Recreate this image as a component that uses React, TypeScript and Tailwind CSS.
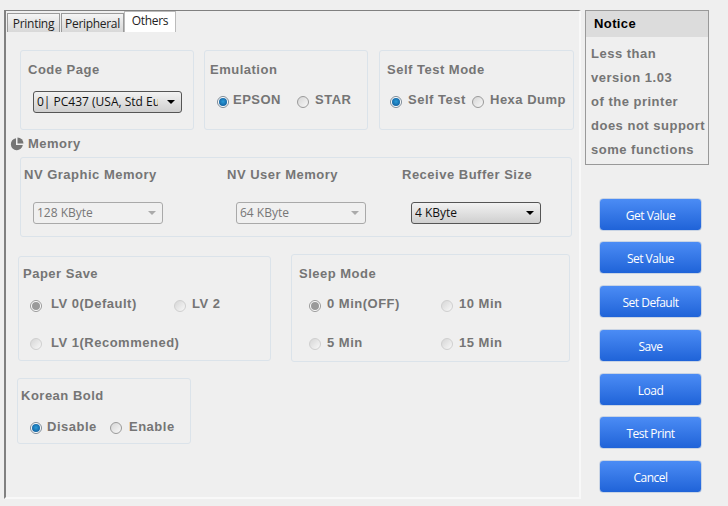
import React from "react";

const label = "font-['Liberation_Sans',sans-serif] font-bold text-[13px] leading-[16px] tracking-[0.5px] text-[#757575] whitespace-nowrap";

function Radio({ text, checked, off, high, gap = "gap-[6px]", className = "" }: { text: string; checked?: boolean; off?: boolean; high?: boolean; gap?: string; className?: string }) {
  return (
    <div className={`flex items-center ${gap} ${className}`}>
      {checked ? (
        <span className={`w-[12px] h-[12px] rounded-full border flex items-center justify-center bg-white shrink-0 ${off ? "border-[#999]" : "border-[#7d8a96]"}`}>
          <span className={`w-[8px] h-[8px] rounded-full ${off ? "bg-[#9a9a9a]" : "bg-[radial-gradient(circle_at_50%_45%,#2a9bd8,#0a4f8f)]"}`} />
        </span>
      ) : (
        <span className={`w-[12px] h-[12px] rounded-full border bg-gradient-to-br from-[#d6d6d6] to-[#f8f8f8] shrink-0 ${off ? "border-[#cfcfcf]" : "border-[#9a9a9a]"}`} />
      )}
      <span className={`${label} ${high ? "mb-[4px]" : "mb-[2px]"} ${off ? "text-[#8a8a8a]" : ""}`}>{text}</span>
    </div>
  );
}

function Select({ text, off, className }: { text: string; off?: boolean; className: string }) {
  return (
    <div
      className={`h-[22px] rounded-[3px] border flex items-center pl-[3px] pr-[5px] overflow-hidden font-['Open_Sans',sans-serif] text-[12px] ${
        off
          ? "border-[#a9a9a9] bg-[#f0f0f0] text-[#777]"
          : "border-[#555] bg-gradient-to-b from-[#f2f2f2] to-[#cfcfcf] text-[#111]"
      } ${className}`}
    >
      <span className="flex-1 overflow-hidden whitespace-nowrap">{text}</span>
      <span className={`ml-[9px] mr-[1px] w-0 h-0 border-x-[4px] border-x-transparent border-t-[4px] ${off ? "border-t-[#aaa]" : "border-t-black"}`} />
    </div>
  );
}

function Group({ className, children }: { className: string; children: React.ReactNode }) {
  return <div className={`rounded-[3px] border border-[#dbe3ea] shrink-0 ${className}`}>{children}</div>;
}

function Tab({ text, active, className }: { text: string; active?: boolean; className: string }) {
  return (
    <div
      className={`border border-b-0 font-['Open_Sans',sans-serif] text-[12px] leading-[16px] tracking-[-0.3px] text-[#222] flex justify-center ${
        active
          ? "h-[21px] bg-white border-[#bbb] pt-[1px]"
          : "h-[19px] mt-[2px] bg-gradient-to-b from-[#f4f4f4] to-[#d8d8d8] border-[#9a9a9a] pt-[2px]"
      } ${className}`}
    >
      {text}
    </div>
  );
}

function Btn({ text, className = "" }: { text: string; className?: string }) {
  return (
    <div className={`w-[103px] h-[33px] pt-[2px] rounded-[4px] bg-gradient-to-b from-[#4b8cf5] to-[#1f63d8] border border-[#c9d4e4] flex items-center justify-center font-['Open_Sans',sans-serif] text-[12px] tracking-[-0.5px] text-white ${className}`}>
      {text}
    </div>
  );
}

export default function App() {
  return (
    <div className="w-[728px] h-[506px] bg-[#efefef] flex overflow-hidden">
      {/* main tab panel */}
      <div className="ml-[4px] mt-[10px] w-[577px] h-[489px] border-l-2 border-t border-[#808080] border-r-2 border-b-2 border-r-[#f8f8f8] border-b-[#f8f8f8] shrink-0">
        <div className="flex pl-[1px] h-[21px]">
          <Tab text="Printing" className="w-[53px]" />
          <Tab text="Peripheral" className="w-[63px] ml-[1px]" />
          <Tab text="Others" active className="w-[52px]" />
        </div>

        <div className="flex pl-[14px] gap-[10px] mt-[18px]">
          <Group className="w-[174px] h-[80px] pl-[7px] pt-[11px]">
            <div className={label}>Code Page</div>
            <Select text="0| PC437 (USA, Std Europe)" className="w-[149px] mt-[13px] ml-[5px]" />
          </Group>
          <Group className="w-[164px] h-[80px] pl-[5px] pt-[11px]">
            <div className={label}>Emulation</div>
            <div className="flex mt-[14px] ml-[7px]">
              <Radio text="EPSON" checked high gap="gap-[4px]" className="w-[80px]" />
              <Radio text="STAR" high />
            </div>
          </Group>
          <Group className="w-[195px] h-[80px] ml-[1px] pl-[7px] pt-[11px]">
            <div className={label}>Self Test Mode</div>
            <div className="flex mt-[14px] ml-[3px]">
              <Radio text="Self Test" checked high className="w-[82px]" />
              <Radio text="Hexa Dump" high />
            </div>
          </Group>
        </div>

        <div className="flex items-center gap-[4px] ml-[4px] mt-[6px] h-[16px]">
          <svg width="14" height="14" viewBox="0 0 14 14">
            <path d="M6 1.2A6 6 0 1 0 12.8 8H6Z" fill="#757575" />
            <path d="M7.5 0.5A6 6 0 0 1 13.5 6.5H7.5Z" fill="#757575" />
          </svg>
          <span className={label}>Memory</span>
        </div>

        <Group className="w-[552px] h-[80px] ml-[14px] mt-[5px] pl-[3px] pt-[9px] flex">
          <div className="w-[203px]">
            <div className={label}>NV Graphic Memory</div>
            <Select off text="128 KByte" className="w-[130px] mt-[19px] ml-[9px]" />
          </div>
          <div className="w-[175px]">
            <div className={label}>NV User Memory</div>
            <Select off text="64 KByte" className="w-[130px] mt-[19px] ml-[9px]" />
          </div>
          <div>
            <div className={label}>Receive Buffer Size</div>
            <Select text="4 KByte" className="w-[130px] mt-[19px] ml-[9px]" />
          </div>
        </Group>

        <div className="flex ml-[12px] mt-[17px]">
          <Group className="w-[253px] h-[105px] mt-[2px] pl-[4px] pt-[9px]">
            <div className={label}>Paper Save</div>
            <div className="flex mt-[14px] ml-[7px]">
              <Radio text="LV 0(Default)" checked off high gap="gap-[9px]" className="w-[144px]" />
              <Radio text="LV 2" off high />
            </div>
            <div className="mt-[19px] ml-[7px]">
              <Radio text="LV 1(Recommened)" off gap="gap-[9px]" />
            </div>
          </Group>
          <Group className="w-[279px] h-[108px] ml-[20px] pl-[7px] pt-[11px]">
            <div className={label}>Sleep Mode</div>
            <div className="flex mt-[14px] ml-[10px]">
              <div className="w-[132px]"><Radio text="0 Min(OFF)" checked off high /></div>
              <Radio text="10 Min" off high />
            </div>
            <div className="flex mt-[19px] ml-[10px]">
              <div className="w-[132px]"><Radio text="5 Min" off /></div>
              <Radio text="15 Min" off />
            </div>
          </Group>
        </div>

        <Group className="w-[174px] h-[66px] ml-[11px] mt-[16px] pl-[3px] pt-[9px]">
          <div className={label}>Korean Bold</div>
          <div className="flex mt-[15px] ml-[9px]">
            <Radio text="Disable" checked gap="gap-[5px]" className="w-[80px]" />
            <Radio text="Enable" gap="gap-[7px]" />
          </div>
        </Group>
      </div>

      {/* right column */}
      <div className="ml-[4px] mt-[10px] flex flex-col">
        <div className="w-[124px] h-[155px] border border-[#999] flex flex-col">
          <div className="h-[26px] bg-[#dcdcdc] pl-[8px] pt-[5px] font-['Liberation_Sans',sans-serif] font-bold text-[13px] leading-[16px] tracking-[0.4px] text-black">Notice</div>
          <div className={`${label} pl-[5px] !leading-[24px] pt-[5px]`}>
            <div>Less than</div>
            <div>version 1.03</div>
            <div>of the printer</div>
            <div>does not support</div>
            <div>some functions</div>
          </div>
        </div>
        <div className="flex flex-col gap-[11px] mt-[33px] ml-[14px]">
          <Btn text="Get Value" />
          <Btn text="Set Value" className="-mt-[1px]" />
          <Btn text="Set Default" />
          <Btn text="Save" />
          <Btn text="Load" />
          <Btn text="Test Print" className="-mt-[1px]" />
          <Btn text="Cancel" />
        </div>
      </div>
    </div>
  );
}
